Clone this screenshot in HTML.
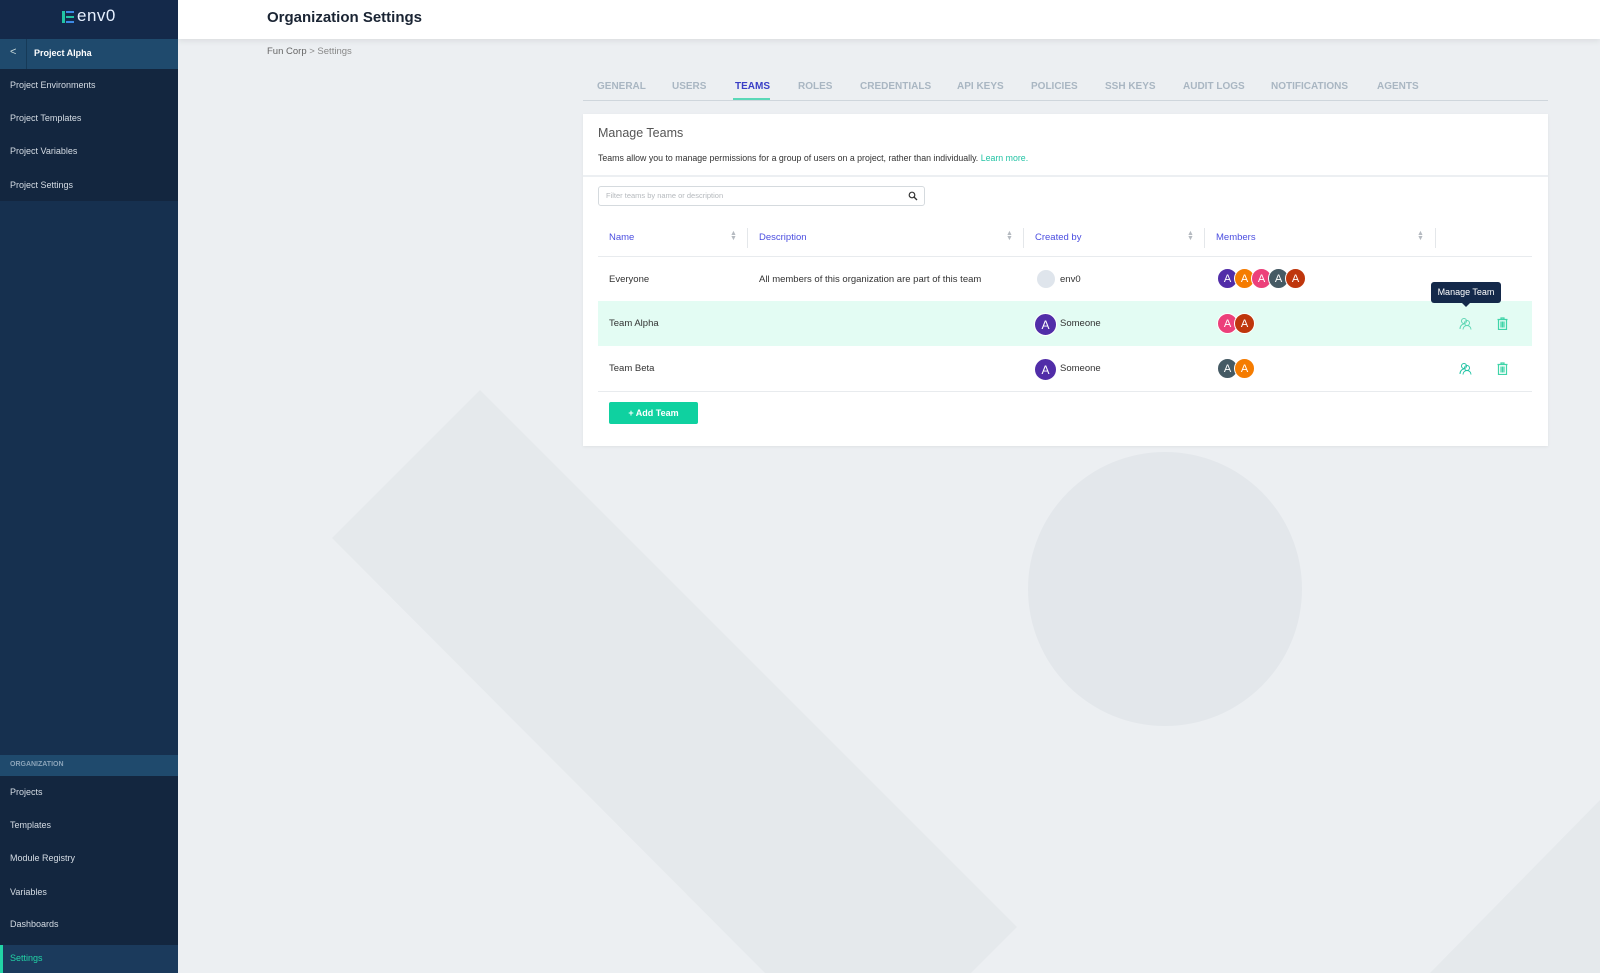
<!DOCTYPE html>
<html style="overflow:hidden;width:1600px;height:973px"><head><meta charset="utf-8"><style>
*{box-sizing:border-box;margin:0;padding:0}
body{width:1600px;height:973px;overflow:hidden;background:#eceff2;font-family:"Liberation Sans",sans-serif;position:relative}
#w{position:absolute;left:0;top:0;width:1600px;height:973px;overflow:hidden}
.a{position:absolute}
.sb{left:0;top:0;width:178px;height:973px;background:#16304f}
.sb .it{position:absolute;left:10px;font-size:9px;color:#d5dce4}
.av{position:absolute;border-radius:50%;color:#fff;font-size:11px;display:flex;align-items:center;justify-content:center;border:1px solid #fff}
.tab{position:absolute;top:81px;font-size:10px;color:#a9b6c2;font-weight:bold}
.th{position:absolute;top:232px;font-size:9.5px;color:#4b4ee0}
.sort{position:absolute;top:231px;font-size:7px;color:#b5bac0;line-height:5px}
.sep{position:absolute;top:228px;width:1px;height:20px;background:#e4e7ea}
.td{position:absolute;font-size:9.5px;color:#333}
</style></head><body><div id="w">
<svg class="a" style="left:0;top:0" width="1600" height="973" viewBox="0 0 1600 973">
<circle cx="1165" cy="589" r="137" fill="#e3e7eb"/>
<polygon points="480,390 1017,927 971,973 765,973 332,538" fill="#e5e9ec"/>
<polygon points="1600,800 1600,973 1430,973" fill="#e5e9ec"/>
</svg>
<div class="a" style="left:178px;top:0;width:1422px;height:39px;background:#fff;box-shadow:0 2px 6px rgba(0,0,0,.08)"></div>
<div class="a" style="left:267px;top:9px;font-size:15px;font-weight:bold;color:#1a2433">Organization Settings</div>
<div class="a" style="left:267px;top:46px;font-size:9.5px;color:#666">Fun Corp <span style="color:#888">&gt; Settings</span></div>

<div class="a sb">
 <div class="a" style="left:0;top:0;width:178px;height:39px;background:#14294a"></div>
 <div class="a" style="left:62px;top:11px;width:12px;height:12px">
  <div class="a" style="left:0;top:0;width:3px;height:12px;background:#22c3a4"></div>
  <div class="a" style="left:4px;top:0;width:8px;height:2px;background:#3d8be6"></div>
  <div class="a" style="left:4px;top:5px;width:8px;height:2px;background:#22c3a4"></div>
  <div class="a" style="left:4px;top:10px;width:8px;height:2px;background:#3d8be6"></div>
 </div>
 <div class="a" style="left:77px;top:6px;font-size:17px;color:#e6f0ff;letter-spacing:.5px">env0</div>
 <div class="a" style="left:0;top:39px;width:178px;height:30px;background:#1f4a6d"></div>
 <div class="a" style="left:26px;top:39px;width:1px;height:30px;background:#163a58"></div>
 <div class="a" style="left:10px;top:46px;font-size:11px;color:#cdd">&lt;</div>
 <div class="it" style="left:34px;top:48px;color:#fff;font-weight:bold">Project Alpha</div>
 <div class="a" style="left:0;top:69px;width:178px;height:132px;background:#13263f"></div>
 <div class="it" style="top:80px">Project Environments</div>
 <div class="it" style="top:113px">Project Templates</div>
 <div class="it" style="top:146px">Project Variables</div>
 <div class="it" style="top:180px">Project Settings</div>
 <div class="a" style="left:0;top:755px;width:178px;height:21px;background:#1f4a6d"></div>
 <div class="it" style="top:761px;font-size:7px;color:#8aa3b8;font-weight:bold">ORGANIZATION</div>
 <div class="a" style="left:0;top:776px;width:178px;height:197px;background:#13263f"></div>
 <div class="it" style="top:787px">Projects</div>
 <div class="it" style="top:820px">Templates</div>
 <div class="it" style="top:853px">Module Registry</div>
 <div class="it" style="top:887px">Variables</div>
 <div class="it" style="top:919px">Dashboards</div>
 <div class="a" style="left:0;top:945px;width:178px;height:28px;background:#1b3a5c"></div>
 <div class="a" style="left:0;top:945px;width:3px;height:28px;background:#22d3a6"></div>
 <div class="it" style="top:953px;color:#22d3a6">Settings</div>
</div>

<div class="a" style="left:583px;top:100px;width:965px;height:1px;background:#cfd6dc"></div>
<div class="tab" style="left:597px">GENERAL</div>
<div class="tab" style="left:672px">USERS</div>
<div class="tab" style="left:735px;color:#3a3fc6">TEAMS</div>
<div class="a" style="left:733px;top:98px;width:37px;height:2px;background:#5ad8b8"></div>
<div class="tab" style="left:798px">ROLES</div>
<div class="tab" style="left:860px">CREDENTIALS</div>
<div class="tab" style="left:957px">API KEYS</div>
<div class="tab" style="left:1031px">POLICIES</div>
<div class="tab" style="left:1105px">SSH KEYS</div>
<div class="tab" style="left:1183px">AUDIT LOGS</div>
<div class="tab" style="left:1271px">NOTIFICATIONS</div>
<div class="tab" style="left:1377px">AGENTS</div>

<div class="a" style="left:583px;top:114px;width:965px;height:332px;background:#fff;box-shadow:0 1px 3px rgba(0,0,0,.06)"></div>
<div class="a" style="left:598px;top:126px;font-size:12.5px;color:#555">Manage Teams</div>
<div class="a" style="left:598px;top:153px;font-size:8.8px;color:#333">Teams allow you to manage permissions for a group of users on a project, rather than individually. <span style="color:#22c3a4">Learn more.</span></div>
<div class="a" style="left:583px;top:175px;width:965px;height:2px;background:#eceff2"></div>
<div class="a" style="left:598px;top:186px;width:327px;height:20px;border:1px solid #d5dade;border-radius:3px"></div>
<div class="a" style="left:606px;top:191px;font-size:7.5px;color:#b5b9bd">Filter teams by name or description</div>
<svg class="a" style="left:908px;top:191px" width="10" height="10" viewBox="0 0 10 10"><circle cx="4" cy="4" r="2.8" stroke="#333" stroke-width="1.2" fill="none"/><path d="M6 6L9 9" stroke="#333" stroke-width="1.3"/></svg>

<div class="th" style="left:609px">Name</div><div class="sort" style="left:730px">▲<br>▼</div><div class="sep" style="left:747px"></div>
<div class="th" style="left:759px">Description</div><div class="sort" style="left:1006px">▲<br>▼</div><div class="sep" style="left:1023px"></div>
<div class="th" style="left:1035px">Created by</div><div class="sort" style="left:1187px">▲<br>▼</div><div class="sep" style="left:1204px"></div>
<div class="th" style="left:1216px">Members</div><div class="sort" style="left:1417px">▲<br>▼</div><div class="sep" style="left:1435px"></div>
<div class="a" style="left:598px;top:256px;width:934px;height:1px;background:#e8ebee"></div>
<div class="a" style="left:598px;top:301px;width:934px;height:45px;background:#e3fcf3"></div>
<div class="a" style="left:598px;top:391px;width:934px;height:1px;background:#e8ebee"></div>

<div class="td" style="left:609px;top:274px">Everyone</div>
<div class="td" style="left:759px;top:274px">All members of this organization are part of this team</div>
<div class="td" style="left:609px;top:318px">Team Alpha</div>
<div class="td" style="left:609px;top:363px">Team Beta</div>

<div class="av" style="left:1036px;top:269px;width:20px;height:20px;background:#dfe5ec"></div>
<div class="td" style="left:1060px;top:274px">env0</div>
<div class="av" style="left:1034px;top:313px;width:23px;height:23px;background:#512da8;font-size:12px">A</div>
<div class="td" style="left:1060px;top:318px">Someone</div>
<div class="av" style="left:1034px;top:358px;width:23px;height:23px;background:#512da8;font-size:12px">A</div>
<div class="td" style="left:1060px;top:363px">Someone</div>

<div class="av" style="left:1217px;top:268px;width:21px;height:21px;background:#512da8">A</div>
<div class="av" style="left:1234px;top:268px;width:21px;height:21px;background:#f57c00">A</div>
<div class="av" style="left:1251px;top:268px;width:21px;height:21px;background:#ec407a">A</div>
<div class="av" style="left:1268px;top:268px;width:21px;height:21px;background:#455a64">A</div>
<div class="av" style="left:1285px;top:268px;width:21px;height:21px;background:#bf360c">A</div>
<div class="av" style="left:1217px;top:313px;width:21px;height:21px;background:#ec407a">A</div>
<div class="av" style="left:1234px;top:313px;width:21px;height:21px;background:#bf360c">A</div>
<div class="av" style="left:1217px;top:358px;width:21px;height:21px;background:#455a64">A</div>
<div class="av" style="left:1234px;top:358px;width:21px;height:21px;background:#f57c00">A</div>

<div class="a" style="left:1431px;top:282px;width:70px;height:21px;background:#14294a;border-radius:3px;color:#fff;font-size:9px;text-align:center;line-height:21px">Manage Team</div>
<div class="a" style="left:1462px;top:303px;width:0;height:0;border-left:4px solid transparent;border-right:4px solid transparent;border-top:4px solid #14294a"></div>
<svg class="a" style="left:1459px;top:317px" width="13" height="13" viewBox="0 0 13 13" fill="none" stroke="#5fd6b4" stroke-width="1"><circle cx="5" cy="4" r="2.5"/><path d="M1 12c0-3 2-5 4-5"/><circle cx="8" cy="6" r="2.5"/><path d="M4 12.5c0-2.5 2-4 4-4s4 1.5 4 4"/></svg>
<svg class="a" style="left:1459px;top:362px" width="13" height="13" viewBox="0 0 13 13" fill="none" stroke="#22c3a4" stroke-width="1"><circle cx="5" cy="4" r="2.5"/><path d="M1 12c0-3 2-5 4-5"/><circle cx="8" cy="6" r="2.5"/><path d="M4 12.5c0-2.5 2-4 4-4s4 1.5 4 4"/></svg>
<svg class="a" style="left:1497px;top:317px" width="11" height="13" viewBox="0 0 11 13" fill="none" stroke="#3fd4a8" stroke-width="1.2"><path d="M0.5 2.5h10M4 2.5V1h3v1.5M1.5 2.5V12.5h8V2.5M4 4.5v6M5.5 4.5v6M7 4.5v6"/></svg>
<svg class="a" style="left:1497px;top:362px" width="11" height="13" viewBox="0 0 11 13" fill="none" stroke="#3fd4a8" stroke-width="1.2"><path d="M0.5 2.5h10M4 2.5V1h3v1.5M1.5 2.5V12.5h8V2.5M4 4.5v6M5.5 4.5v6M7 4.5v6"/></svg>

<div class="a" style="left:609px;top:402px;width:89px;height:22px;background:#0fd1a0;border-radius:2px;color:#fff;font-size:9px;font-weight:bold;text-align:center;line-height:22px">+ Add Team</div>
</div></body></html>
